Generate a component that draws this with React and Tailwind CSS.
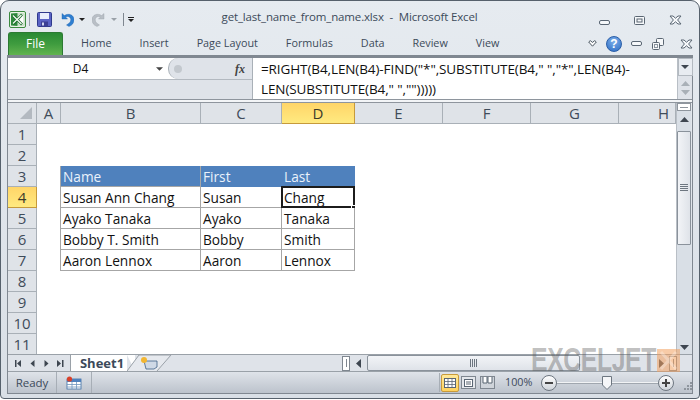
import React from "react";

const ui = "font-['Open_Sans',sans-serif]";

function ExcelLogo() {
  return (
    <svg width="17" height="17" viewBox="0 0 17 17">
      <rect x="0.5" y="0.5" width="16" height="16" rx="1.5" fill="#e9f3e6" stroke="#3c8a3f" />
      <rect x="9" y="3" width="6" height="11" fill="#fff" stroke="#9cc49c" strokeWidth="0.7" />
      <path d="M2 2.5 L8.5 2 L8.5 15 L2 14.5Z" fill="#2f8a3c" />
      <path d="M4 4.5 L13 13.5 M13 3.5 L4 13" stroke="#1a6a2a" strokeWidth="2.6" />
      <path d="M4 4.5 L12.5 13 M12.5 4 L4 12.5" stroke="#f4fbf2" strokeWidth="1.3" />
    </svg>
  );
}
function Save() {
  return (
    <svg width="15" height="15" viewBox="0 0 15 15">
      <rect x="0.5" y="0.5" width="14" height="14" rx="1" fill="#5a63c4" stroke="#2f3a8c" />
      <rect x="3" y="1" width="9" height="6" fill="#e8eefc" />
      <rect x="4" y="9.5" width="7" height="5" fill="#3b3f93" />
      <rect x="5" y="10.5" width="2" height="3" fill="#cfd6f0" />
    </svg>
  );
}
function Undo({ c = "#2f7fd1", d = "#1c5fa8" }) {
  return (
    <svg width="13" height="15" viewBox="0 0 13 15">
      <path d="M1 1.5 L1 7 L6.5 7 L4.6 5 C7 3.6 9.8 5 9.8 7.8 C9.8 10.2 8 11.5 5.5 13 L8 14.5 C11.5 13 13 10.8 13 7.8 C13 3 7.7 0.6 3.4 3.6Z" fill={c} stroke={d} strokeWidth="0.4" />
    </svg>
  );
}
function Redo() {
  return (
    <svg width="13" height="15" viewBox="0 0 13 15">
      <path d="M12 1.5 L12 7 L6.5 7 L8.4 5 C6 3.6 3.2 5 3.2 7.8 C3.2 10.2 5 11.5 7.5 13 L5 14.5 C1.5 13 0 10.8 0 7.8 C0 3 5.3 0.6 9.6 3.6Z" fill="#b9bfc6" stroke="#9aa1a8" strokeWidth="0.4" />
    </svg>
  );
}
const Caret = ({ c = "#222", w = 6, h = 3 }) => (
  <svg width={w} height={h} viewBox="0 0 6 3"><path d="M0 0H6L3 3Z" fill={c} /></svg>
);
const XIcon = ({ w = 13, h = 10 }) => (
  <svg width={w} height={h} viewBox="0 0 13 10">
    <path d="M1 1H4L6.5 3.2L9 1H12L8.6 5L12 9H9L6.5 6.8L4 9H1L4.4 5Z" fill="#f6f8fa" stroke="#5a6673" strokeWidth="1" />
  </svg>
);
const MinIcon = ({ w = 12, h = 5 }) => (
  <svg width={w} height={h} viewBox={`0 0 ${w} ${h}`}>
    <rect x="0.5" y="0.5" width={w - 1} height={h - 1} rx="1.5" fill="#f6f8fa" stroke="#5a6673" />
  </svg>
);
const MaxIcon = () => (
  <svg width="11" height="9" viewBox="0 0 11 9">
    <rect x="0.5" y="0.5" width="10" height="8" rx="1" fill="#f6f8fa" stroke="#5a6673" />
    <rect x="3" y="3" width="5" height="3" fill="none" stroke="#5a6673" />
  </svg>
);
const RestoreIcon = () => (
  <svg width="12" height="12" viewBox="0 0 12 12">
    <rect x="4.5" y="0.5" width="7" height="7" rx="1" fill="#f6f8fa" stroke="#5a6673" />
    <rect x="0.5" y="4.5" width="7" height="7" rx="1" fill="#f6f8fa" stroke="#5a6673" />
    <rect x="2.5" y="6.5" width="3" height="3" fill="none" stroke="#8a949e" />
  </svg>
);
const Heart = () => (
  <svg width="9" height="7" viewBox="0 0 9 7">
    <path d="M0.7 2 L2.2 0.6 L4.5 2.4 L6.8 0.6 L8.3 2 L4.5 6.2Z" fill="#fff" stroke="#4a5560" strokeWidth="1" />
  </svg>
);
const Help = () => (
  <div className="w-[16px] h-[16px] rounded-full bg-[radial-gradient(circle_at_50%_30%,#7fb0ea,#2b6cc4)] border border-[#2a5ea8] flex items-center justify-center text-white text-[12px] font-bold leading-none font-['Liberation_Sans',sans-serif]">?</div>
);
const Tri = ({ dir = "up", c = "#3e4650", w = 9, h = 5 }) => {
  const d = { up: "M0 5H9L4.5 0Z", down: "M0 0H9L4.5 5Z" }[dir];
  return <svg width={w} height={h} viewBox="0 0 9 5"><path d={d} fill={c} /></svg>;
};
const NavIcon = ({ d }) => (
  <svg width="7" height="7" viewBox="0 0 7 7"><path d={d} fill="#3e4650" /></svg>
);
const Grip = ({ vertical }) => (
  <svg width="8" height="8" viewBox="0 0 8 8">
    {vertical
      ? [0, 2, 4, 6].map((y) => <rect key={y} x="0" y={y} width="8" height="1" fill="#6d7680" />)
      : [0, 2, 4, 6].map((x) => <rect key={x} x={x} y="0" width="1" height="8" fill="#6d7680" />)}
  </svg>
);

function Head({ children, active, className = "" }) {
  return (
    <div
      className={
        "flex items-center justify-center text-[15px] leading-none h-[21px] font-['Open_Sans',sans-serif] border-r border-b " +
        (active
          ? "bg-gradient-to-b from-[#ffd568] to-[#ffea80] border-[#c69a3b] text-[#3b3b2b] "
          : "bg-[#dfe3e8] border-[#a9b0b7] text-[#3f4c5a] ") +
        className
      }
    >
      {children}
    </div>
  );
}

const cell = "h-[21px] pl-[2px] pt-[2px] flex items-center text-[13.7px] leading-none text-[#111] whitespace-nowrap font-['Open_Sans',sans-serif] ";
const blue = cell + "bg-[#4f81bd] text-[#eaf2fb] ";
const boxed = cell + "bg-white border-r border-b border-[#a6a6a6] ";

const rows = [
  ["Susan Ann Chang", "Susan", "Chang"],
  ["Ayako Tanaka", "Ayako", "Tanaka"],
  ["Bobby T. Smith", "Bobby", "Smith"],
  ["Aaron Lennox", "Aaron", "Lennox"],
];

function Sheet() {
  const colHeads = ["B", "C", "D", "E", "F", "G"];
  const blanks = (n) => Array.from({ length: n }, (_, i) => <div key={i} className="h-[21px] bg-white" />);
  return (
    <div className="grid grid-cols-[29px_24px_140px_81px_73px_88px_88px_88px_57px] h-[251px] overflow-hidden flex-none">
      <div className="h-[21px] bg-[#dfe3e8] border-r border-b border-[#a9b0b7] flex items-end justify-end pr-[4px] pb-[4px]">
        <svg width="12" height="12" viewBox="0 0 12 12"><path d="M12 0V12H0Z" fill="#b3b9c0" /></svg>
      </div>
      <Head>A</Head>
      {colHeads.map((c) => (
        <Head key={c} active={c === "D"}>{c}</Head>
      ))}
      <Head className="!justify-start pl-[39px]">H</Head>

      <Head>1</Head>{blanks(8)}
      <Head>2</Head>{blanks(8)}

      <Head>3</Head>
      <div className="h-[21px] bg-white border-r border-[#a6a6a6]" />
      <div className={blue + "border-r border-b border-[#a6a6a6]"}>Name</div>
      <div className={blue + "border-b border-[#4f81bd]"}>First</div>
      <div className={blue + "border-r border-b border-[#4f81bd]"}>Last</div>
      {blanks(4)}

      {rows.map((r, i) => (
        <React.Fragment key={i}>
          <Head active={i === 0}>{i + 4}</Head>
          <div className="h-[21px] bg-white border-r border-[#a6a6a6]" />
          <div className={boxed}>{r[0]}</div>
          <div className={boxed}>{r[1]}</div>
          <div className={boxed + "relative"}>
            {r[2]}
            {i === 0 && (
              <>
                <div className="absolute -left-px -top-px w-[74px] h-[22px] border-2 border-[#1c1c1c]" />
                <div className="absolute -right-[2px] -bottom-[3px] w-[5px] h-[5px] bg-[#1c1c1c] border border-white" />
              </>
            )}
          </div>
          {blanks(4)}
        </React.Fragment>
      ))}

      {[8, 9, 10, 11].map((n) => (
        <React.Fragment key={n}>
          <Head>{n}</Head>
          {blanks(8)}
        </React.Fragment>
      ))}
    </div>
  );
}

export default function App() {
  return (
    <div className={"relative w-[700px] h-[400px] bg-white overflow-hidden " + ui}>
      <div className="w-[700px] h-[399px] border border-[#56616c] rounded-t-[9px] rounded-b-[4px] bg-gradient-to-b from-[#e6ebf0] to-[#d9dfe6] px-[6px] flex flex-col">
        {/* title bar */}
        <div className="h-[31px] flex items-center flex-none text-[#3c4a5a]">
          <div className="flex-1 flex items-center pl-[2px] pt-[5px]">
            <ExcelLogo />
            <div className="w-px h-[13px] bg-[#9aa3ac] ml-[3px] mr-[7px]" />
            <Save />
            <div className="ml-[9px]"><Undo /></div>
            <div className="ml-[5px]"><Caret /></div>
            <div className="ml-[7px]"><Redo /></div>
            <div className="ml-[6px]"><Caret c="#9aa1a8" /></div>
            <div className="w-px h-[13px] bg-[#7f8790] ml-[6px] mr-[4px]" />
            <div className="flex flex-col items-center gap-[1px]">
              <div className="w-[6px] h-px bg-[#222]" />
              <Caret />
            </div>
          </div>
          <div className="text-[11.5px] tracking-[-0.15px] leading-none pt-[1px] pl-[8px] whitespace-pre">get_last_name_from_name.xlsx  -  Microsoft Excel</div>
          <div className="flex-1 flex items-center justify-end pr-[11px] pt-[7px] gap-[24px]">
            <div className="pt-[5px]"><MinIcon w={11} h={5} /></div>
            <MaxIcon />
            <XIcon />
          </div>
        </div>

        {/* ribbon tabs */}
        <div className="h-[23px] flex items-center flex-none">
          <div className="w-[55px] ml-[1px] h-[23px] rounded-t-[3px] border border-b-0 border-[#2c7a33] bg-gradient-to-b from-[#2a8a34] via-[#3f9c3f] to-[#61b34f] text-white text-[12px] flex items-center justify-center">File</div>
          <div className="flex gap-[28px] ml-[18px] text-[10.8px] text-[#3c4a5a] whitespace-nowrap">
            <span>Home</span><span>Insert</span><span>Page Layout</span><span>Formulas</span><span>Data</span><span>Review</span><span>View</span>
          </div>
          <div className="flex-1 flex items-center justify-end">
            <Heart />
            <div className="ml-[9px]"><Help /></div>
            <div className="ml-[9px]"><MinIcon w={11} h={5} /></div>
            <div className="ml-[10px]"><RestoreIcon /></div>
            <div className="ml-[16px]"><XIcon /></div>
          </div>
        </div>

        {/* work area */}
        <div className="flex flex-col flex-none border-x border-t-[3px] border-b border-[#808891]">
          {/* formula bar */}
          <div className="flex h-[41px] flex-none">
            <div className="w-[244px] flex flex-col flex-none">
              <div className="h-[21px] bg-white flex items-center">
                <div className="w-[160px] flex items-center flex-none">
                  <div className="flex-1 text-center text-[12px] text-[#111] pr-[3px]">D4</div>
                  <div className="mr-[5px]"><Caret c="#444" w={7} h={4} /></div>
                </div>
                <div className="h-[21px] flex-1 bg-[#dfe3e9] rounded-l-[10px] border-l border-[#a9b0b7] flex items-center justify-between pl-[5px] pr-[7px]">
                  <div className="w-[8px] h-[8px] rounded-full bg-[#c3c8ce]" />
                  <span className="italic font-bold text-[12px] text-[#444] font-['Liberation_Serif',serif]">fx</span>
                </div>
              </div>
              <div className="flex-1 bg-[#dfe3e9] border-t border-[#b3b9c0]" />
            </div>
            <div className="w-px bg-[#a9b0b7] flex-none" />
            <div className="w-[424px] bg-white flex-none text-[13.5px] leading-[20px] text-[#111] pl-[8px] pt-[1px] font-['Open_Sans',sans-serif] tracking-[-0.1px]">
              <div className="whitespace-nowrap">=RIGHT(B4,LEN(B4)-FIND("*",SUBSTITUTE(B4," ","*",LEN(B4)-</div>
              <div className="whitespace-nowrap">LEN(SUBSTITUTE(B4," ","")))))</div>
            </div>
            <div className="w-[15px] bg-[#dfe3e9] flex flex-col items-center flex-none border-l border-[#b9bfc6]">
              <div className="w-[15px] h-[18px] border border-[#b3b9c0] bg-[#e8ecf1] flex items-center justify-center"><Caret c="#3e4650" w={8} h={4} /></div>
              <div className="mt-[5px]"><Tri c="#a9b0b7" /></div>
              <div className="mt-[4px]"><Tri dir="down" c="#a9b0b7" /></div>
            </div>
          </div>
          <div className="h-[4px] flex-none bg-[#f3f5f7] border-y border-[#8e959d]" />

          {/* sheet + scrollbar */}
          <div className="flex flex-none">
            <Sheet />
            <div className="w-[15px] h-[251px] flex-none bg-[#d9dfe6] border-l border-[#b9bfc6] flex flex-col items-center">
              <div className="w-[14px] h-[8px] bg-white border border-[#8e959d] flex items-center justify-center">
                <div className="w-[8px] h-px bg-[#8e959d]" />
              </div>
              <div className="mt-[6px]"><Tri /></div>
              <div className="mt-[9px] w-[14px] h-[114px] rounded-[1px] border border-[#8a929b] bg-gradient-to-r from-[#f2f4f7] to-[#dfe3e9] flex items-center justify-center">
                <Grip vertical />
              </div>
              <div className="flex-1" />
              <div className="mb-[4px]"><Tri dir="down" /></div>
            </div>
          </div>

          {/* sheet tabs + horizontal scrollbar */}
          <div className="h-[17px] flex items-center flex-none bg-[#dfe3e9] border-t border-[#9aa1a8]">
            <div className="w-[63px] h-full flex items-center gap-[7px] pl-[7px] flex-none border-r border-[#9aa1a8]">
              <NavIcon d="M0 0H1.5V7H0ZM6 0V7L2 3.5Z" />
              <NavIcon d="M5.5 0V7L1.5 3.5Z" />
              <NavIcon d="M1.5 0V7L5.5 3.5Z" />
              <NavIcon d="M0 0V7L4 3.5ZM5 0H6.5V7H5Z" />
            </div>
            <div className="w-[56px] h-full bg-white flex items-center justify-center pl-[6px] text-[13px] font-bold text-[#3c4a5a] flex-none leading-none">Sheet1</div>
            <svg width="50" height="16" viewBox="0 0 50 16" className="flex-none">
              <path d="M0 0H8V16Z" fill="#fff" />
              <path d="M0 16L12 0H44L30 16" fill="#e6e9ee" stroke="#9aa1a8" />
              <path d="M17 6H30V12L27 14H19Z" fill="#cfd9e6" stroke="#3e5f86" strokeWidth="0.8" />
              <circle cx="17" cy="5" r="3" fill="#f2b632" />
            </svg>
            <div className="w-[165px] flex-none" />
            <div className="w-[8px] h-[15px] bg-white border border-[#7f8790] flex items-center justify-center flex-none">
              <div className="w-px h-[8px] bg-[#7f8790]" />
            </div>
            <div className="w-[17px] flex items-center justify-center flex-none">
              <svg width="5" height="9" viewBox="0 0 5 9"><path d="M5 0V9L0 4.5Z" fill="#3e4650" /></svg>
            </div>
            <div className="w-[213px] h-[16px] rounded-[2px] border border-[#8a929b] bg-gradient-to-b from-[#f2f4f7] to-[#dfe3e9] flex items-center justify-center flex-none">
              <Grip />
            </div>
            <div className="flex-1" />
            <div className="mr-[5px]"><svg width="5" height="9" viewBox="0 0 5 9"><path d="M0 0V9L5 4.5Z" fill="#3e4650" /></svg></div>
            <div className="w-[8px] h-[15px] bg-white border border-[#7f8790] flex items-center justify-center flex-none mr-[15px]">
              <div className="w-px h-[8px] bg-[#7f8790]" />
            </div>
          </div>

          {/* status bar */}
          <div className="h-[22px] flex items-center flex-none bg-gradient-to-b from-[#dfe3e9] to-[#bcc3cc] border-t border-[#9aa1a8] text-[#3c4a5a]">
            <div className="w-[49px] h-full flex items-center justify-center text-[11.5px] border-r border-[#a7aeb6] flex-none">Ready</div>
            <div className="w-[35px] h-full flex items-center justify-center border-r border-[#a7aeb6] flex-none">
              <svg width="16" height="14" viewBox="0 0 16 14">
                <rect x="1" y="3" width="14" height="10" fill="#fff" stroke="#3e6ea5" strokeWidth="0.8" />
                <rect x="1" y="3" width="14" height="3" fill="#4f81bd" />
                <path d="M1 8.5H15M1 11H15M6 6V13M10.5 6V13" stroke="#6f94bd" strokeWidth="0.8" />
                <circle cx="3.5" cy="3" r="2.6" fill="#d9412b" />
              </svg>
            </div>
            <div className="w-[347px] flex-none" />
            <div className="h-[19px] w-px bg-[#a7aeb6] mr-[1px] flex-none" />
            <div className="w-[18px] h-[18px] rounded-[2px] border border-[#c89a3a] bg-gradient-to-b from-[#ffe99a] to-[#ffd25c] flex items-center justify-center flex-none">
              <svg width="12" height="10" viewBox="0 0 12 10"><rect x="0.5" y="0.5" width="11" height="9" fill="#fff" stroke="#5a6673" /><path d="M0 3.5H12M0 6.5H12M4 0V10M8 0V10" stroke="#5a6673" strokeWidth="0.8" /></svg>
            </div>
            <div className="w-[15px] h-[13px] ml-[2px] border border-[#7f8790] bg-[#e4e7eb] flex items-center justify-center flex-none">
              <svg width="9" height="8" viewBox="0 0 9 8"><rect x="0.5" y="0.5" width="8" height="7" fill="#fff" stroke="#5a6673" /><path d="M2 3H7M2 5H7" stroke="#5a6673" /></svg>
            </div>
            <div className="w-[15px] h-[13px] ml-[4px] border border-[#7f8790] bg-[#cfd4da] flex items-start justify-center flex-none">
              <svg width="11" height="8" viewBox="0 0 11 8"><path d="M1 0V6H5V0M6 0V6H10V0" fill="#fff" stroke="#5a6673" /></svg>
            </div>
            <div className="ml-[10px] w-[29px] text-[10.8px] whitespace-nowrap flex-none">100%</div>
            <div className="ml-[7px] w-[16px] h-[16px] rounded-full border border-[#6d7680] bg-gradient-to-b from-white to-[#cfd4da] flex items-center justify-center flex-none">
              <div className="w-[8px] h-[2px] bg-[#444]" />
            </div>
            <div className="w-[101px] h-[2px] bg-[#f1f3f5] border-b border-[#a0a7af] flex-none flex items-center relative">
              <div className="absolute left-[45px] -top-[6px]">
                <svg width="10" height="14" viewBox="0 0 10 14"><path d="M0.5 0.5H9.5V9L5 13.5L0.5 9Z" fill="#f5f6f8" stroke="#6d7680" /></svg>
              </div>
            </div>
            <div className="w-[16px] h-[16px] rounded-full border border-[#6d7680] bg-gradient-to-b from-white to-[#cfd4da] flex items-center justify-center flex-none relative">
              <div className="w-[8px] h-[2px] bg-[#444]" />
              <div className="absolute w-[2px] h-[8px] bg-[#444]" />
            </div>
            <div className="flex-1 self-end flex justify-end pb-[1px]">
              <svg width="10" height="10" viewBox="0 0 10 10">
                <g fill="#8e959d">
                  <rect x="8" y="0" width="2" height="2" /><rect x="5" y="3" width="2" height="2" /><rect x="8" y="3" width="2" height="2" />
                  <rect x="2" y="6" width="2" height="2" /><rect x="5" y="6" width="2" height="2" /><rect x="8" y="6" width="2" height="2" />
                </g>
              </svg>
            </div>
          </div>
        </div>
      </div>

      {/* watermark */}
      <div className="absolute left-[531px] top-[347px] flex items-start pointer-events-none">
        <div className="w-[125px] h-[26px]">
          <div className="origin-left scale-x-[.75] text-[33px] font-bold leading-[26px] tracking-[-0.5px] text-[#5a5a5a]/40 font-['Liberation_Sans',sans-serif] whitespace-nowrap">EXCELJET</div>
        </div>
        <div className="w-[23px] h-[23px] mt-[2px] ml-[1px] bg-[#f2a15e]/55 flex items-center justify-center">
          <svg width="23" height="23" viewBox="0 0 23 23"><path d="M4 3L19 20M19 3L4 20" stroke="#fff" strokeOpacity="0.3" strokeWidth="3" /></svg>
        </div>
      </div>
    </div>
  );
}
